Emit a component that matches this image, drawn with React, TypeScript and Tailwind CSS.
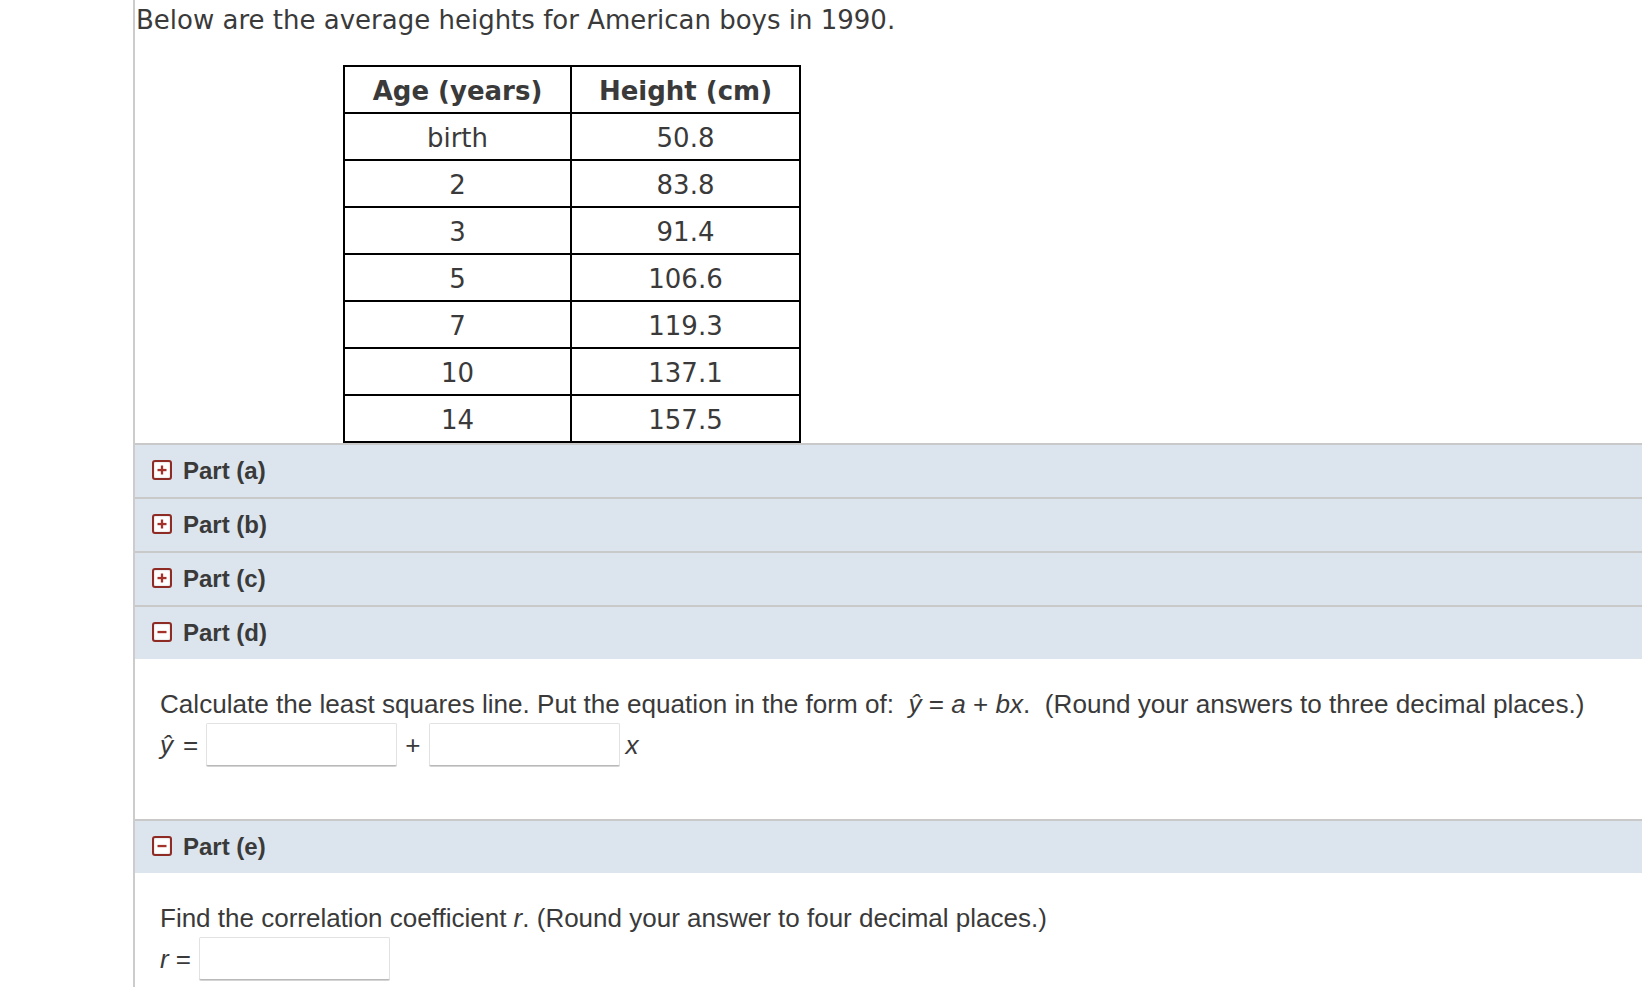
import React from "react";

function ToggleIcon({ open }: { open: boolean }) {
  return (
    <div className="w-[20px] h-[20px] mb-[3px] rounded-[3px] border-2 border-[#8f2b25] bg-white flex items-center justify-center shadow-[inset_0_0_2px_rgba(0,0,0,0.25)]">
      <svg width="12" height="12" viewBox="0 0 12 12">
        <rect x="1.5" y="4.9" width="9" height="2.3" fill="#a3322b" />
        {!open && <rect x="4.85" y="1.5" width="2.3" height="9" fill="#a3322b" />}
      </svg>
    </div>
  );
}

function PartHeader({ label, open }: { label: string; open: boolean }) {
  return (
    <div className="h-[54px] border-t-2 border-[#c9c9c9] bg-[#dce5ee] flex items-center pl-[17px]">
      <ToggleIcon open={open} />
      <span className="ml-[11px] font-['Liberation_Sans',Arial,sans-serif] font-bold text-[24px] leading-[28px] text-[#3a3a3a]">
        {label}
      </span>
    </div>
  );
}

function Box({ className = "" }: { className?: string }) {
  return (
    <div
      className={
        "w-[191px] h-[43px] bg-white border border-[#e2e2e2] border-b-[#b9b9b9] rounded-[2px] shadow-[0_1px_0_#d4d4d4] " +
        className
      }
    />
  );
}

export default function App() {
  const rows: [string, string][] = [
    ["birth", "50.8"],
    ["2", "83.8"],
    ["3", "91.4"],
    ["5", "106.6"],
    ["7", "119.3"],
    ["10", "137.1"],
    ["14", "157.5"],
  ];
  return (
    <div className="w-[1642px] h-[987px] overflow-hidden bg-white text-[#333333]">
      <div className="ml-[133px] border-l-2 border-[#cccccc] h-[987px]">
        <div className="pt-[5px] pl-px font-['DejaVu_Sans',Verdana,sans-serif] text-[26px] leading-[30px] text-[#3a3a3a]">
          Below are the average heights for American boys in 1990.
        </div>

        <div className="mt-[30px] ml-[208px] w-[458px] border-2 border-black font-['DejaVu_Sans',Verdana,sans-serif] text-[26px] text-[#3a3a3a]">
          <div className="flex h-[45px] font-bold">
            <div className="w-[225px] pt-[4px] flex items-center justify-center">Age (years)</div>
            <div className="flex-1 pt-[4px] border-l-2 border-black flex items-center justify-center">Height (cm)</div>
          </div>
          {rows.map(([a, h]) => (
            <div key={a} className="flex h-[47px] border-t-2 border-black">
              <div className="w-[225px] pt-[4px] flex items-center justify-center">{a}</div>
              <div className="flex-1 pt-[4px] border-l-2 border-black flex items-center justify-center">{h}</div>
            </div>
          ))}
        </div>

        <PartHeader label="Part (a)" open={false} />
        <PartHeader label="Part (b)" open={false} />
        <PartHeader label="Part (c)" open={false} />
        <PartHeader label="Part (d)" open={true} />

        <div className="h-[160px] pt-[30px] pl-[25px] font-['Liberation_Sans',Arial,sans-serif] text-[26.1px] leading-[30px] text-[#3a3a3a] whitespace-nowrap">
          <div>
            Calculate the least squares line. Put the equation in the form of:&nbsp; <i>ŷ</i> = <i>a</i> + <i>bx</i>.&nbsp; (Round your answers to three decimal places.)
          </div>
          <div className="mt-[4px] flex items-center h-[43px]">
            <i>ŷ</i>
            <span className="ml-[10px]">=</span>
            <Box className="ml-[8px]" />
            <span className="ml-[8px]">+</span>
            <Box className="ml-[8px]" />
            <i className="ml-[6px]">x</i>
          </div>
        </div>

        <PartHeader label="Part (e)" open={true} />

        <div className="pt-[30px] pl-[25px] font-['Liberation_Sans',Arial,sans-serif] text-[26px] leading-[30px] text-[#3a3a3a] whitespace-nowrap">
          <div>
            Find the correlation coefficient <i>r</i>. (Round your answer to four decimal places.)
          </div>
          <div className="mt-[4px] flex items-center h-[43px]">
            <i>r</i>
            <span className="ml-[7px]">=</span>
            <Box className="ml-[8px]" />
          </div>
        </div>
      </div>
    </div>
  );
}
